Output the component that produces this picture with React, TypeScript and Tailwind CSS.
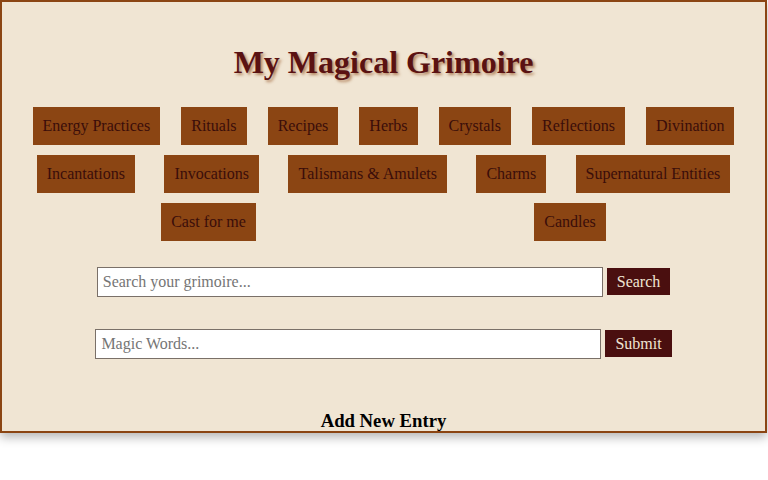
const sections = [
  'Energy Practices',
  'Rituals',
  'Recipes',
  'Herbs',
  'Crystals',
  'Reflections',
  'Divination',
  'Incantations',
  'Invocations',
  'Talismans & Amulets',
  'Charms',
  'Supernatural Entities',
  'Cast for me',
  'Candles',
];

const serif = "font-['Liberation_Serif','Times_New_Roman',serif]";

export default function App() {
  return (
    <div className={`${serif} min-h-[480px]`}>
      <div className="h-[433px] w-[767px] overflow-hidden border-2 border-[#8b4513] bg-[#f0e5d3] px-5 shadow-[0_4px_10px_#0000004d]">
        <h1 className="mt-[22px] mb-[21px] pt-5 text-center text-[32px] font-bold leading-[37px] text-[#5a1212] [text-shadow:2px_2px_3px_rgba(139,69,19,0.6)]">
          My Magical Grimoire
        </h1>

        <nav className="flex flex-wrap justify-around">
          {sections.map((s) => (
            <button
              key={s}
              className="mx-[10px] my-[5px] bg-[#8b4513] px-[10px] py-[10px] text-[16px] leading-[18px] text-[#3a0d0a]"
            >
              {s}
            </button>
          ))}
        </nav>

        <form className="mt-[21px] text-center">
          <input
            type="text"
            placeholder="Search your grimoire..."
            className="w-[506px] border border-[#7a7068] bg-white px-[5px] py-[5px] text-[16px] leading-[18px] placeholder:text-[#757575]"
          />{' '}
          <button
            type="button"
            className="bg-[#4a0f0f] px-[10px] py-[5px] text-[16px] leading-[17px] text-[#f0e5d3]"
          >
            Search
          </button>
        </form>

        <form className="mt-[32px] text-center">
          <input
            type="text"
            placeholder="Magic Words..."
            className="w-[506px] border border-[#7a7068] bg-white px-[5px] py-[5px] text-[16px] leading-[18px] placeholder:text-[#757575]"
          />{' '}
          <button
            type="button"
            className="bg-[#4a0f0f] px-[10px] py-[5px] text-[16px] leading-[17px] text-[#f0e5d3]"
          >
            Submit
          </button>
        </form>

        <h3 className="mt-[51px] text-center text-[18.72px] font-bold leading-[22px] text-black">
          Add New Entry
        </h3>
      </div>
    </div>
  );
}
